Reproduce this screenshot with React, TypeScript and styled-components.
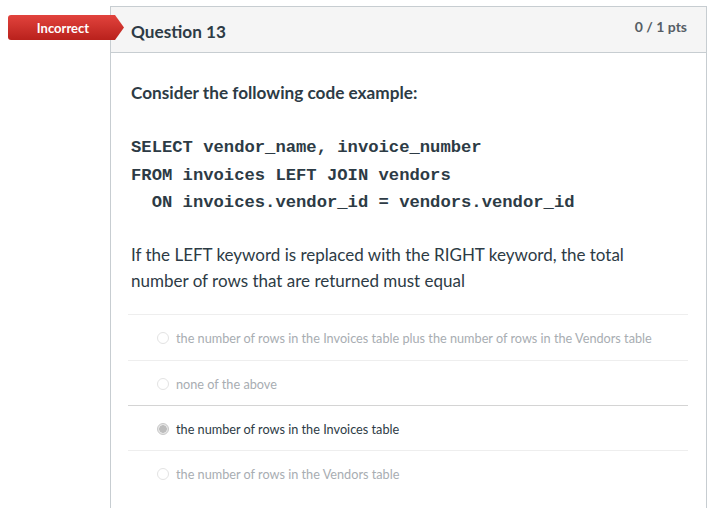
import React from "react";
import styled, { createGlobalStyle } from "styled-components";

const Global = createGlobalStyle`
  html, body { margin: 0; padding: 0; background: #fff; }
  body { font-family: Lato, "Open Sans", sans-serif; color: #2d3b45; }
`;

const Page = styled.div`
  display: flex;
  padding-top: 6px;
  height: 502px;
  overflow: hidden;
`;

const Gutter = styled.div`
  width: 110px;
  flex: none;
`;

const Card = styled.div`
  position: relative;
  flex: 1;
  border: 1px solid #c7cdd1;
  border-bottom: none;
  background: #fff;
`;

const Header = styled.div`
  display: flex;
  justify-content: space-between;
  align-items: flex-start;
  height: 45px;
  background: #f5f5f5;
  border-bottom: 1px solid #c7cdd1;
  padding: 0 19px 0 20px;
`;

const Title = styled.h2`
  margin: 0;
  padding-top: 15px;
  font-size: 17.2px;
  font-weight: 700;
  line-height: 20px;
  color: #2d3b45;
`;

const Points = styled.div`
  padding-top: 11px;
  font-size: 14px;
  font-weight: 700;
  line-height: 18px;
  color: #555e65;
`;

const Badge = styled.div`
  position: absolute;
  left: -103px;
  top: 8px;
  width: 116px;
  height: 25px;
  border-radius: 3px 0 0 3px;
  background: linear-gradient(#e2433d, #b9211c);
  clip-path: polygon(0 0, 107px 0, 100% 50%, 107px 100%, 0 100%);
  display: flex;
  align-items: center;
  box-sizing: border-box;
`;

const BadgeText = styled.span`
  width: 110px;
  text-align: center;
  color: #fff;
  font-size: 13px;
  font-weight: 700;
`;

const Body = styled.div`
  padding: 29px 18px 0 20px;
`;

const Intro = styled.p`
  margin: 0 0 30px;
  font-size: 17.2px;
  font-weight: 700;
  line-height: 22px;
`;

const Code = styled.pre`
  margin: 0 0 25px;
  font-family: "Liberation Mono", "Courier New", monospace;
  font-weight: 700;
  font-size: 17.2px;
  line-height: 27.5px;
  color: #2d3b45;
`;

const Prompt = styled.p`
  margin: 0 0 20px;
  max-width: 530px;
  font-size: 17px;
  line-height: 26px;
  color: #2d3b45;
`;

const Answers = styled.div`
  margin-left: -3px;
  display: flex;
  flex-direction: column;
`;

const Answer = styled.div<{ $strong?: boolean; $first?: boolean }>`
  display: flex;
  align-items: center;
  height: ${(p) => (p.$first ? "46px" : "45px")};
  border-top: 1px solid ${(p) => (p.$strong ? "#d4d4d4" : "#eeeeee")};
  padding: 2px 0 0 29px;
  box-sizing: border-box;
`;

const Radio = styled.span<{ $checked?: boolean }>`
  width: 12px;
  height: 12px;
  border-radius: 50%;
  box-sizing: border-box;
  border: 1px solid ${(p) => (p.$checked ? "#c8c8c8" : "#e3e3e3")};
  background: ${(p) => (p.$checked ? "radial-gradient(circle, #bdbdbd 0 3.5px, #e6e6e6 4px)" : "#fff")};
  margin-right: 7px;
  flex: none;
`;

const AnswerText = styled.span<{ $checked?: boolean }>`
  font-size: 12.7px;
  color: ${(p) => (p.$checked ? "#2d3b45" : "#a8adb2")};
`;

const answers = [
  { text: "the number of rows in the Invoices table plus the number of rows in the Vendors table" },
  { text: "none of the above" },
  { text: "the number of rows in the Invoices table", checked: true, strong: true },
  { text: "the number of rows in the Vendors table" },
];

export default function App() {
  return (
    <>
      <Global />
      <Page>
        <Gutter />
        <Card>
          <Badge>
            <BadgeText>Incorrect</BadgeText>
          </Badge>
          <Header>
            <Title>Question 13</Title>
            <Points>0 / 1 pts</Points>
          </Header>
          <Body>
            <Intro>Consider the following code example:</Intro>
            <Code>{`SELECT vendor_name, invoice_number
FROM invoices LEFT JOIN vendors
  ON invoices.vendor_id = vendors.vendor_id`}</Code>
            <Prompt>
              If the LEFT keyword is replaced with the RIGHT keyword, the total number of rows that are returned must equal
            </Prompt>
            <Answers>
              {answers.map((a, i) => (
                <Answer key={i} $strong={a.strong} $first={i === 0}>
                  <Radio $checked={a.checked} />
                  <AnswerText $checked={a.checked}>{a.text}</AnswerText>
                </Answer>
              ))}
            </Answers>
          </Body>
        </Card>
      </Page>
    </>
  );
}
